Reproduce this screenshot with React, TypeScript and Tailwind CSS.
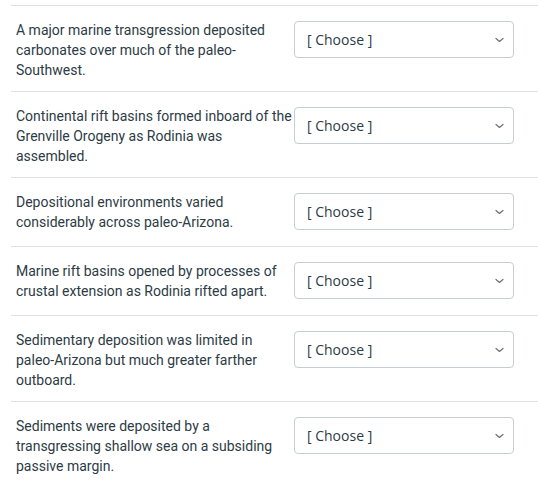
import React from "react";

const rows = [
  "A major marine transgression deposited carbonates over much of the paleo-Southwest.",
  "Continental rift basins formed inboard of the Grenville Orogeny as Rodinia was assembled.",
  "Depositional environments varied considerably across paleo-Arizona.",
  "Marine rift basins opened by processes of crustal extension as Rodinia rifted apart.",
  "Sedimentary deposition was limited in paleo-Arizona but much greater farther outboard.",
  "Sediments were deposited by a transgressing shallow sea on a subsiding passive margin.",
];

function Chevron() {
  return (
    <svg width="9" height="6" viewBox="0 0 9 6" className="absolute right-[9px] top-1/2 -translate-y-1/2">
      <path d="M1 1.5 L4.5 4.5 L8 1.5" fill="none" stroke="#707070" strokeWidth="1.2" strokeLinecap="round" strokeLinejoin="round" />
    </svg>
  );
}

export default function App() {
  return (
    <div className="w-[538px] h-[500px] bg-white overflow-hidden pt-[5px]" style={{ fontFamily: "Roboto, 'Liberation Sans', sans-serif" }}>
      <div className="ml-[11px]">
        {rows.map((t, i) => (
          <div key={i} className="flex items-start border-t border-[#e1e1e1]">
            <div className="w-[283px] pl-[5px] pt-[14px] pb-[11px] text-[14px] leading-[20px] text-[#2d3b45]">
              {t}
            </div>
            <div className="pt-[15px] pb-[16px]">
              <div className="relative w-[220px] h-[37px] border border-[#c7cdd1] rounded-[4px] bg-white flex items-center pl-[12px]">
                <span className="text-[14px] text-[#2d3b45]" style={{ fontFamily: "'Open Sans', sans-serif" }}>
                  [ Choose ]
                </span>
                <Chevron />
              </div>
            </div>
          </div>
        ))}
      </div>
    </div>
  );
}
